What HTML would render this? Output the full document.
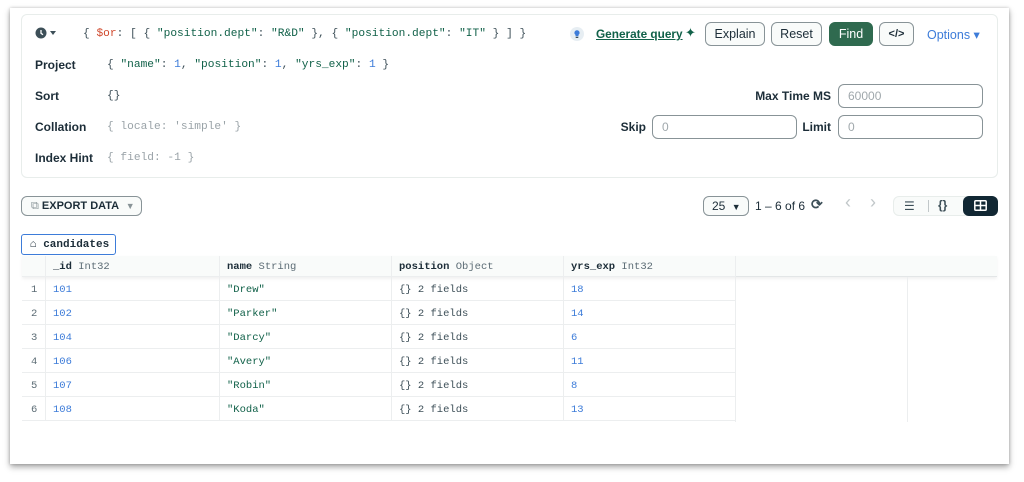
<!DOCTYPE html>
<html><head><meta charset="utf-8"><style>
*{box-sizing:border-box;margin:0;padding:0}
body{width:1024px;height:482px;background:#fff;position:relative;overflow:hidden;font-family:"Liberation Sans",sans-serif;color:#1c2d38}
.abs{position:absolute}
.frame{left:10px;top:8px;width:999px;height:456px;background:#fff;box-shadow:0 3px 6px rgba(0,0,0,.35),0 0 3px rgba(0,0,0,.2)}
.qp{left:21px;top:14px;width:977px;height:164px;border:1px solid #e8edeb;border-radius:6px}
.mono{font-family:"Liberation Mono",monospace;font-size:11.2px}
.lbl{font-size:12px;font-weight:bold;color:#1c2d38}
.g{color:#116149}.b{color:#3d7cd9}.r{color:#d0482c}.gr{color:#9aa3a8}.k{color:#3d4f58}
.btn{border:1px solid #889397;border-radius:6px;background:#f9fbfa;font-size:12.5px;height:24px;line-height:22px;text-align:center;color:#1c2d38}
.inp{border:1px solid #889397;border-radius:6px;height:24px;font-size:12px;color:#a0a8ac;padding-left:9px;line-height:22px}
.cell{position:absolute;height:24px;line-height:26px;overflow:hidden;border-right:1px solid #eceeef;border-bottom:1px solid #eceeef;font-family:"Liberation Mono",monospace;font-size:10.5px;padding-left:7px}
.hd{font-weight:bold;color:#1c2d38}
</style></head><body>
<div class="abs frame"></div>
<div class="abs qp"></div>
<svg class="abs" style="left:35px;top:27px" width="24" height="12" viewBox="0 0 24 12"><circle cx="6" cy="6" r="5.5" fill="#3d4f58"/><path d="M6 3v3.3l2 1.4" stroke="#fff" stroke-width="1.3" fill="none"/><path d="M15 4h6l-3 4z" fill="#3d4f58"/></svg>
<div class="abs mono k" style="left:83px;top:28px">{ <span class="r">$or</span>: [ { <span class="g">"position.dept"</span>: <span class="g">"R&amp;D"</span> }, { <span class="g">"position.dept"</span>: <span class="g">"IT"</span> } ] }</div>
<div class="abs lbl" style="left:35px;top:58px">Project</div>
<div class="abs mono k" style="left:107px;top:59px">{ <span class="g">"name"</span>: <span class="b">1</span>, <span class="g">"position"</span>: <span class="b">1</span>, <span class="g">"yrs_exp"</span>: <span class="b">1</span> }</div>
<div class="abs lbl" style="left:35px;top:89px">Sort</div>
<div class="abs mono k" style="left:107px;top:90px">{}</div>
<div class="abs lbl" style="left:35px;top:120px">Collation</div>
<div class="abs mono gr" style="left:107px;top:121px">{ locale: 'simple' }</div>
<div class="abs lbl" style="left:35px;top:151px">Index Hint</div>
<div class="abs mono gr" style="left:107px;top:152px">{ field: -1 }</div>
<svg class="abs" style="left:570px;top:27px" width="14" height="14" viewBox="0 0 14 14"><circle cx="7" cy="7" r="7" fill="#e7eef3"/><path d="M7 3.2a2.6 2.6 0 0 0-1.5 4.7v1.4h3V7.9A2.6 2.6 0 0 0 7 3.2z" fill="#3d7cd9"/><rect x="5.7" y="9.8" width="2.6" height="1.2" fill="#3d4f58"/></svg>
<div class="abs" style="left:596px;top:27px;font-size:11.8px;font-weight:bold;color:#116149;text-decoration:underline">Generate query</div>
<div class="abs" style="left:685px;top:25px;font-size:13px;color:#116149">✦</div>
<div class="abs btn" style="left:705px;top:22px;width:60px">Explain</div>
<div class="abs btn" style="left:771px;top:22px;width:51px">Reset</div>
<div class="abs btn" style="left:829px;top:22px;width:44px;background:#2f6a4f;border-color:#2f6a4f;color:#fff">Find</div>
<div class="abs btn" style="left:879px;top:22px;width:35px;font-weight:bold;font-size:11px">&lt;/&gt;</div>
<div class="abs" style="left:927px;top:27px;font-size:12.5px;color:#3d7cd9">Options ▾</div>
<div class="abs lbl" style="left:700px;width:131px;text-align:right;top:89px">Max Time MS</div>
<div class="abs inp" style="left:838px;top:84px;width:145px">60000</div>
<div class="abs lbl" style="left:600px;width:46px;text-align:right;top:120px">Skip</div>
<div class="abs inp" style="left:652px;top:115px;width:145px">0</div>
<div class="abs lbl" style="left:790px;width:41px;text-align:right;top:120px">Limit</div>
<div class="abs inp" style="left:838px;top:115px;width:145px">0</div>
<div class="abs btn" style="left:21px;top:196px;width:121px;height:20px;line-height:18px;font-size:11px;font-weight:bold;text-align:left;padding-left:9px"><span style="color:#889397;font-weight:normal">⧉</span> EXPORT DATA <span style="color:#889397;font-size:9px;margin-left:4px">▼</span></div>
<div class="abs btn" style="left:703px;top:196px;width:46px;height:20px;line-height:18px;font-size:12px;text-align:left;padding-left:8px">25 <span style="font-size:9px;margin-left:3px">▼</span></div>
<div class="abs" style="left:755px;top:199px;font-size:12px">1 – 6 of 6</div>
<div class="abs" style="left:811px;top:196px;font-size:14px;color:#3d4f58;font-weight:bold">⟳</div>
<div class="abs" style="left:845px;top:192px;font-size:18px;color:#c1c7c9">‹</div>
<div class="abs" style="left:870px;top:192px;font-size:18px;color:#c1c7c9">›</div>
<div class="abs" style="left:893px;top:196px;width:105px;height:20px;border:1px solid #e8edeb;border-radius:6px;background:#f9fbfa"></div>
<div class="abs" style="left:904px;top:199px;font-size:12px;color:#3d4f58">☰</div>
<div class="abs" style="left:928px;top:200px;width:1px;height:12px;background:#c1c7c9"></div>
<div class="abs" style="left:938px;top:198px;font-size:12px;font-weight:bold;color:#3d4f58">{}</div>
<div class="abs" style="left:963px;top:196px;width:35px;height:20px;background:#112733;border-radius:6px"></div>
<svg class="abs" style="left:974px;top:200px" width="13" height="11" viewBox="0 0 13 11"><rect x="0.8" y="0.8" width="11.4" height="9.4" rx="1" fill="none" stroke="#fff" stroke-width="1.5"/><path d="M6.5 1v9M1 5.5h11" stroke="#fff" stroke-width="1.5"/></svg>
<div class="abs" style="left:21px;top:234px;width:95px;height:21px;border:1px solid #3d7cd9;border-radius:3px;font-family:'Liberation Mono',monospace;font-size:11px;font-weight:bold;line-height:21px;padding-left:8px">⌂ candidates</div>
<div class="abs" style="left:22px;top:256px;width:975px;height:21px;background:#f9fbfa;border-bottom:1px solid #e3e6e7;box-shadow:0 2px 3px rgba(0,0,0,.06)"></div>
<div class="cell" style="left:22px;top:256px;width:24px;height:21px;line-height:23px"></div>
<div class="cell" style="left:46px;top:256px;width:174px;height:21px;line-height:23px"><span class="hd">_id</span> <span style="color:#5c6c75">Int32</span></div>
<div class="cell" style="left:220px;top:256px;width:172px;height:21px;line-height:23px"><span class="hd">name</span> <span style="color:#5c6c75">String</span></div>
<div class="cell" style="left:392px;top:256px;width:172px;height:21px;line-height:23px"><span class="hd">position</span> <span style="color:#5c6c75">Object</span></div>
<div class="cell" style="left:564px;top:256px;width:172px;height:21px;line-height:23px"><span class="hd">yrs_exp</span> <span style="color:#5c6c75">Int32</span></div>
<div class="abs" style="left:907px;top:277px;width:1px;height:145px;background:#eceeef"></div>
<div class="abs" style="left:735px;top:277px;width:1px;height:145px;background:#eceeef"></div>
<div id="rows"></div>
<script>
var d=[[1,101,"Drew",18],[2,102,"Parker",14],[3,104,"Darcy",6],[4,106,"Avery",11],[5,107,"Robin",8],[6,108,"Koda",13]],h="";
d.forEach(function(r,i){var t=277+i*24;
h+='<div class="cell" style="left:22px;top:'+t+'px;width:24px;padding-left:9px;color:#5c6c75">'+r[0]+'</div>'+
'<div class="cell" style="left:46px;top:'+t+'px;width:174px;color:#3d7cd9">'+r[1]+'</div>'+
'<div class="cell" style="left:220px;top:'+t+'px;width:172px;color:#116149">"'+r[2]+'"</div>'+
'<div class="cell" style="left:392px;top:'+t+'px;width:172px;color:#3d4f58">{} 2 fields</div>'+
'<div class="cell" style="left:564px;top:'+t+'px;width:172px;color:#3d7cd9">'+r[3]+'</div>';});
document.getElementById('rows').innerHTML=h;
</script>
</body></html>
